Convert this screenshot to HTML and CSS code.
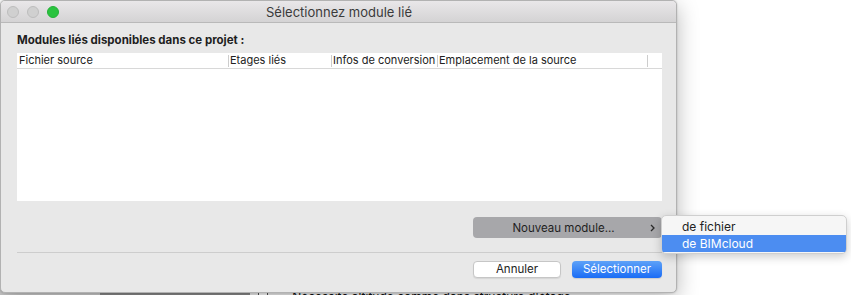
FILE: index.html
```html
<!DOCTYPE html>
<html lang="fr">
<head>
<meta charset="utf-8">
<title>Sélectionnez module lié</title>
<link rel="stylesheet" href="styles.css">
</head>
<body>
<div class="desktop">
  <div class="behind">
    <div class="behind-side"></div>
    <div class="behind-main"><span class="behind-check"></span><span class="behind-text">• Nécessite altitude comme dans structure d'étage</span></div>
  </div>
  <div class="window">
    <div class="titlebar">
      <div class="lights">
        <span class="light"></span>
        <span class="light"></span>
        <span class="light green"></span>
      </div>
      <div class="title">Sélectionnez module lié</div>
      <div></div>
    </div>
    <div class="content">
      <div class="label">Modules liés disponibles dans ce projet :</div>
      <div class="table">
        <div class="thead">
          <div class="th">Fichier source</div>
          <div class="th sep">Etages liés</div>
          <div class="th sep">Infos de conversion</div>
          <div class="th sep">Emplacement de la source</div>
          <div class="th sep"></div>
        </div>
        <div class="tbody"></div>
      </div>
      <div class="row-new">
        <div class="btn-new">
          <span class="btn-new-text">Nouveau module...</span>
          <svg class="chev" width="5" height="8" viewBox="0 0 5 8"><path d="M1 1 L4 4 L1 7" fill="none" stroke="#2a2a2a" stroke-width="1.3"/></svg>
        </div>
      </div>
      <div class="divider"></div>
      <div class="row-actions">
        <div class="btn btn-cancel">Annuler</div>
        <div class="btn btn-primary">Sélectionner</div>
      </div>
    </div>
  </div>
  <div class="menu">
    <div class="menu-item">de fichier</div>
    <div class="menu-item active">de BIMcloud</div>
  </div>
</div>
</body>
</html>
```
FILE: styles.css
```css
* { box-sizing: border-box; }
html, body {
  margin: 0;
  padding: 0;
  background: #ffffff;
  width: 851px;
  height: 295px;
  overflow: hidden;
  font-family: Inter, "Liberation Sans", sans-serif;
  color: #222;
}
.desktop {
  position: relative;
  width: 851px;
  height: 295px;
}
.behind {
  position: absolute;
  left: 0;
  top: 286px;
  width: 600px;
  height: 12px;
  display: flex;
}
.behind-side {
  width: 250px;
  background: linear-gradient(90deg, #cfcfcf 0, #cfcfcf 100px, #8c8c8c 100px, #8c8c8c 250px);
}
.behind-main {
  flex: 1;
  background: #f2f2f2;
  display: flex;
  align-items: flex-start;
  padding-top: 5px;
  gap: 14px;
  padding-left: 8px;
}
.behind-check {
  width: 10px;
  height: 10px;
  border: 1px solid #555;
  border-radius: 2px;
  background: #fff;
}
.behind-text {
  font-size: 12px;
  line-height: 12px;
  color: #111;
  white-space: nowrap;
}
.window {
  position: relative;
  z-index: 2;
  width: 677px;
  height: 293px;
  background: #e8e8e8;
  border: 1px solid #b2b2b2;
  border-radius: 5px;
  box-shadow: 0 6px 22px rgba(0,0,0,0.28), 0 0 2px rgba(0,0,0,0.2);
  overflow: hidden;
}
.titlebar {
  height: 22px;
  display: grid;
  grid-template-columns: 1fr auto 1fr;
  align-items: center;
  background: linear-gradient(#e9e7e9, #d4d3d4);
  border-bottom: 1px solid #b9b9b9;
}
.lights {
  display: flex;
  gap: 8px;
  padding-left: 6px;
}
.light {
  width: 12px;
  height: 12px;
  border-radius: 50%;
  background: #d0d0d0;
  border: 1px solid #bdbdbd;
}
.light.green {
  background: #2ac33f;
  border-color: #24b137;
}
.title {
  font-size: 13px;
  color: #3a3a3a;
  line-height: 22px;
  padding-left: 1px;
}
.content {
  padding: 10px 14px 0 16px;
}
.label {
  font-size: 11.5px;
  font-weight: 700;
  color: #1e1e1e;
  line-height: 14px;
  height: 14px;
  margin-bottom: 6px;
}
.table {
  background: #ffffff;
  height: 148px;
}
.thead {
  display: grid;
  grid-template-columns: 211px 103px 106px 210px 1fr;
  height: 16px;
  border-bottom: 1px solid #d8d8d8;
}
.th {
  font-size: 11px;
  line-height: 15px;
  padding-left: 2px;
  color: #222;
  white-space: nowrap;
  overflow: hidden;
}
.th.sep {
  background: linear-gradient(#cdcdcd, #cdcdcd) left center / 1px 12px no-repeat;
}
.row-new {
  display: flex;
  justify-content: flex-end;
  margin-top: 16px;
}
.btn-new {
  width: 189px;
  height: 21px;
  background: #a7a7aa;
  border-radius: 4px;
  display: flex;
  align-items: center;
  padding-left: 4px;
  padding-right: 7px;
}
.btn-new-text {
  flex: 1;
  font-size: 11.5px;
  color: #1f1f1f;
  text-align: center;
}
.chev { display: block; }
.divider {
  height: 1px;
  background: #cdcdcd;
  margin-top: 14px;
}
.row-actions {
  display: flex;
  justify-content: flex-end;
  gap: 11px;
  margin-top: 8px;
}
.btn {
  height: 17px;
  border-radius: 4px;
  font-size: 11.5px;
  line-height: 17px;
  text-align: center;
}
.btn-cancel {
  width: 88px;
  background: #ffffff;
  border: 1px solid #c6c6c6;
  line-height: 15px;
  box-shadow: 0 1px 1px rgba(0,0,0,0.08);
  color: #222;
}
.btn-primary {
  width: 90px;
  background: linear-gradient(#5ea2f8, #1a6cf5);
  color: #ffffff;
  box-shadow: 0 1px 1px rgba(0,0,0,0.12);
}
.menu {
  position: absolute;
  z-index: 3;
  left: 661px;
  top: 215px;
  width: 186px;
  height: 39px;
  background: #f6f6f6;
  border: 1px solid #cfcfcf;
  border-radius: 5px;
  box-shadow: 0 3px 10px rgba(0,0,0,0.2);
  padding-top: 2px;
  overflow: hidden;
}
.menu-item {
  height: 17px;
  line-height: 17px;
  font-size: 12px;
  padding-left: 20px;
  color: #222;
}
.menu-item.active {
  background: #4c8df1;
  color: #ffffff;
}
```
